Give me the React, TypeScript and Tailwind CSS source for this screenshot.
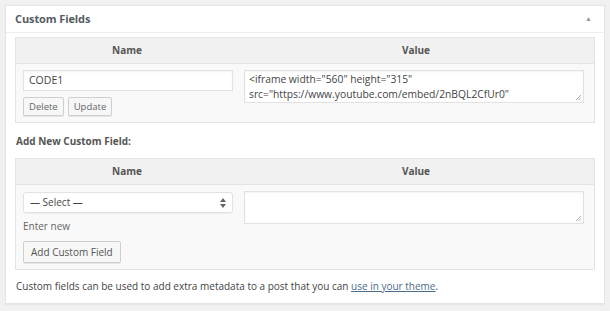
import React from 'react';

const font = { fontFamily: '"Open Sans", "Liberation Sans", sans-serif' };

const SmallButton = ({ label }: { label: string }) => (
  <button className="h-[19px] px-[5px] text-[9.5px] leading-[17px] text-[#666] bg-[#f7f7f7] border border-[#cfcfcf] rounded-[2px] shadow-[0_1px_0_#e5e5e5]">
    {label}
  </button>
);

const Resize = () => (
  <svg className="absolute right-[2px] bottom-[2px]" width="6" height="6" viewBox="0 0 6 6">
    <path d="M1 6 L6 1 M3.5 6 L6 3.5" stroke="#999" strokeWidth="0.8" />
  </svg>
);

const HeaderRow = () => (
  <div className="grid grid-cols-[222px_1fr] h-[26px] bg-[#f1f1f1] border-b border-[#e4e4e4] text-[10px] font-bold text-[#555] items-center text-center">
    <div>Name</div>
    <div>Value</div>
  </div>
);

export default function App() {
  return (
    <div style={font} className="w-[610px] h-[311px] bg-[#f1f1f1] p-[5px] pb-[7px]">
      <div className="h-full bg-white border border-[#e5e5e5] shadow-[0_1px_1px_rgba(0,0,0,0.04)]">
        <div className="h-[27px] flex items-center justify-between px-[9px] border-b border-[#eee]">
          <span className="text-[11px] font-bold text-[#555b62] tracking-[-0.1px]">Custom Fields</span>
          <span className="text-[7px] text-[#999] pr-[3px]">▲</span>
        </div>

        <div className="px-[9px] pt-[4px]">
          <div className="border border-[#e4e4e4] bg-[#f9f9f9]">
            <HeaderRow />
            <div className="grid grid-cols-[222px_1fr] h-[58px]">
              <div className="pl-[7px] pr-[5px] pt-[6px]">
                <div className="h-[21px] bg-white border border-[#e2e2e2] shadow-[inset_0_1px_2px_rgba(0,0,0,0.05)] px-[5px] text-[10.5px] leading-[19px] text-[#444]">
                  CODE1
                </div>
                <div className="flex gap-[4px] mt-[6px]">
                  <SmallButton label="Delete" />
                  <SmallButton label="Update" />
                </div>
              </div>
              <div className="pl-[6px] pr-[10px] pt-[6px]">
                <div className="relative h-[33px] bg-white border border-[#e2e2e2] shadow-[inset_0_1px_2px_rgba(0,0,0,0.05)] px-[4px] pt-[1px] text-[10.3px] leading-[15px] text-[#444]">
                  &lt;iframe width="560" height="315"
                  <br />
                  src="https://www.youtube.com/embed/2nBQL2CfUr0"
                  <Resize />
                </div>
              </div>
            </div>
          </div>

          <div className="h-[35px] flex items-center text-[10px] font-bold text-[#555] pl-[1px] pt-[1px]">
            Add New Custom Field:
          </div>

          <div className="border border-[#e4e4e4] bg-[#f9f9f9]">
            <HeaderRow />
            <div className="grid grid-cols-[222px_1fr] h-[84px]">
              <div className="pl-[7px] pr-[5px] pt-[7px]">
                <div className="h-[21px] bg-white border border-[#e2e2e2] rounded-[3px] shadow-[0_1px_1px_rgba(0,0,0,0.05)] pl-[6px] pr-[6px] flex items-center justify-between text-[10px] text-[#444]">
                  <span>— Select —</span>
                  <svg width="6" height="10" viewBox="0 0 6 10">
                    <path d="M3 0 L6 4 L0 4 Z M0 6 L6 6 L3 10 Z" fill="#666" />
                  </svg>
                </div>
                <div className="text-[10px] text-[#666] mt-[6px] leading-[14px]">Enter new</div>
                <button className="mt-[8px] h-[22px] px-[7px] text-[10px] leading-[20px] text-[#555] bg-[#f7f7f7] border border-[#cfcfcf] rounded-[2px] shadow-[0_1px_0_#e5e5e5]">
                  Add Custom Field
                </button>
              </div>
              <div className="pl-[6px] pr-[10px] pt-[6px]">
                <div className="relative h-[33px] bg-white border border-[#e2e2e2] shadow-[inset_0_1px_2px_rgba(0,0,0,0.05)]">
                  <Resize />
                </div>
              </div>
            </div>
          </div>

          <p className="mt-[9px] text-[10px] text-[#444] pl-[1px]">
            Custom fields can be used to add extra metadata to a post that you can{' '}
            <span className="underline text-[#4a6b8a]">use in your theme</span>.
          </p>
        </div>
      </div>
    </div>
  );
}
